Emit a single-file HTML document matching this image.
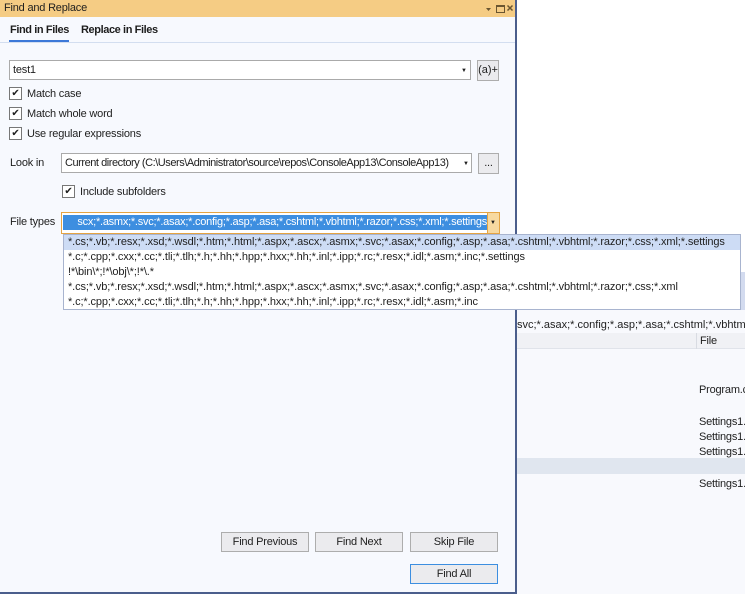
<!DOCTYPE html>
<html><head><style>
*{margin:0;padding:0;box-sizing:border-box}
body{width:745px;height:594px;overflow:hidden;background:#fff;font-family:"Liberation Sans",sans-serif;font-size:11px;letter-spacing:-0.2px;color:#1e1e1e;position:relative}
.a{position:absolute;white-space:nowrap}
.win{left:0;top:0;width:517px;height:594px;background:#f7f9fe;border-right:2px solid #4b5e8c;border-bottom:2px solid #4b5e8c}
.title{left:0;top:0;width:515px;height:17px;background:#f5cc84;padding:2px 0 0 4px}
.cb{width:13px;height:13px;border:1px solid #777;background:#fff;font-size:10px;line-height:11px;text-align:center}
.btn{height:20px;border:1px solid #adadad;background:#ebebee;text-align:center;line-height:18px}
.inp{background:#fff;border:1px solid #aaa;height:20px;padding:3px 3px;white-space:nowrap;overflow:hidden}
.arr{font-size:6px}
.dd div{height:15px;line-height:15px;padding-left:4px;white-space:nowrap;overflow:hidden;letter-spacing:-0.12px;font-size:11px}
</style></head><body>
<div class="a" style="left:517px;top:272px;width:228px;height:38px;background:#d3dbef"></div>
<div class="a" style="left:517px;top:310px;width:228px;height:284px;background:#f8f9fd"></div>
<div class="a" style="left:517px;top:319px;letter-spacing:0">svc;*.asax;*.config;*.asp;*.asa;*.cshtml;*.vbhtml;*</div>
<div class="a" style="left:517px;top:333px;width:228px;height:16px;background:#f0f1f5;border-bottom:1px solid #e0e3ea"></div>
<div class="a" style="left:696px;top:333px;width:1px;height:16px;background:#d8dbe2"></div>
<div class="a" style="left:700px;top:335px">File</div>
<div class="a" style="left:699px;top:384px">Program.c</div>
<div class="a" style="left:699px;top:416px">Settings1.</div>
<div class="a" style="left:699px;top:431px">Settings1.</div>
<div class="a" style="left:699px;top:446px">Settings1.</div>
<div class="a" style="left:517px;top:458px;width:228px;height:16px;background:#e0e6ef"></div>
<div class="a" style="left:699px;top:478px">Settings1.</div>

<div class="a win"></div>
<div class="a title">Find and Replace</div>
<svg class="a" style="left:480px;top:3px" width="34" height="12">
<path d="M6 5 L11 5 L8.5 8 Z" fill="#6a5530"/>
<rect x="16.5" y="2.5" width="8" height="7" fill="none" stroke="#6a5530"/><rect x="16" y="2" width="9" height="2" fill="#6a5530"/>
<path d="M27.5 2.5 L32.5 7.5 M32.5 2.5 L27.5 7.5" stroke="#6a5530" stroke-width="1.5"/>
</svg>
<div class="a" style="left:10px;top:24px;font-weight:bold;letter-spacing:-0.4px">Find in Files</div>
<div class="a" style="left:81px;top:24px;font-weight:bold;letter-spacing:-0.4px">Replace in Files</div>
<div class="a" style="left:9px;top:40px;width:60px;height:2px;background:#3c78d8"></div>
<div class="a" style="left:0;top:42px;width:515px;height:1px;background:#d3def0"></div>

<div class="a inp" style="left:9px;top:60px;width:462px">test1</div>
<div class="a arr" style="left:461px;top:68px">&#9660;</div>
<div class="a btn" style="left:477px;top:60px;width:22px;height:21px;font-size:11px;letter-spacing:0">(a)+</div>

<div class="a cb" style="left:9px;top:87px">&#10004;</div><div class="a" style="left:27px;top:88px">Match case</div>
<div class="a cb" style="left:9px;top:107px">&#10004;</div><div class="a" style="left:27px;top:108px">Match whole word</div>
<div class="a cb" style="left:9px;top:127px">&#10004;</div><div class="a" style="left:27px;top:128px">Use regular expressions</div>

<div class="a" style="left:10px;top:157px">Look in</div>
<div class="a inp" style="left:61px;top:153px;width:411px;letter-spacing:-0.45px">Current directory (C:\Users\Administrator\source\repos\ConsoleApp13\ConsoleApp13)</div>
<div class="a arr" style="left:462px;top:161px;background:#fff;padding:0 1px">&#9660;</div>
<div class="a btn" style="left:478px;top:153px;width:21px;height:21px">...</div>
<div class="a cb" style="left:62px;top:185px">&#10004;</div><div class="a" style="left:80px;top:186px">Include subfolders</div>

<div class="a" style="left:10px;top:216px">File types</div>
<div class="a" style="left:61px;top:212px;width:439px;height:22px;border:1px solid #e5a443;background:#fff"></div>
<div class="a" style="left:63px;top:215px;width:424px;height:15px;background:#3d8ee0;color:#fff;overflow:hidden;font-size:11px;letter-spacing:-0.25px;line-height:15px;text-align:right">scx;*.asmx;*.svc;*.asax;*.config;*.asp;*.asa;*.cshtml;*.vbhtml;*.razor;*.css;*.xml;*.settings</div>
<div class="a" style="left:487px;top:213px;width:12px;height:20px;background:#f7d9a0;border-left:1px solid #e5a443"></div>
<div class="a arr" style="left:490px;top:220px">&#9660;</div>

<div class="a dd" style="left:63px;top:234px;width:678px;height:76px;background:#fff;border:1px solid #a8b4cf">
<div style="background:#cddcf5">*.cs;*.vb;*.resx;*.xsd;*.wsdl;*.htm;*.html;*.aspx;*.ascx;*.asmx;*.svc;*.asax;*.config;*.asp;*.asa;*.cshtml;*.vbhtml;*.razor;*.css;*.xml;*.settings</div>
<div>*.c;*.cpp;*.cxx;*.cc;*.tli;*.tlh;*.h;*.hh;*.hpp;*.hxx;*.hh;*.inl;*.ipp;*.rc;*.resx;*.idl;*.asm;*.inc;*.settings</div>
<div>!*\bin\*;!*\obj\*;!*\.*</div>
<div>*.cs;*.vb;*.resx;*.xsd;*.wsdl;*.htm;*.html;*.aspx;*.ascx;*.asmx;*.svc;*.asax;*.config;*.asp;*.asa;*.cshtml;*.vbhtml;*.razor;*.css;*.xml</div>
<div>*.c;*.cpp;*.cxx;*.cc;*.tli;*.tlh;*.h;*.hh;*.hpp;*.hxx;*.hh;*.inl;*.ipp;*.rc;*.resx;*.idl;*.asm;*.inc</div>
</div>

<div class="a btn" style="left:221px;top:532px;width:88px">Find Previous</div>
<div class="a btn" style="left:315px;top:532px;width:88px">Find Next</div>
<div class="a btn" style="left:410px;top:532px;width:88px">Skip File</div>
<div class="a btn" style="left:410px;top:564px;width:88px;border-color:#3c8ee0">Find All</div>
</body></html>
